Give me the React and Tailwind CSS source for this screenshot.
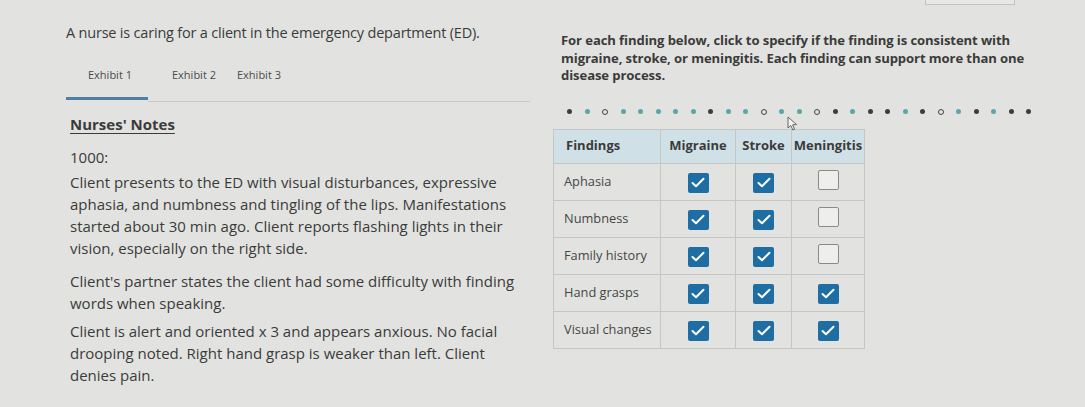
import React from 'react';

const rows = [
  { name: 'Aphasia', checks: [true, true, false] },
  { name: 'Numbness', checks: [true, true, false] },
  { name: 'Family history', checks: [true, true, false] },
  { name: 'Hand grasps', checks: [true, true, true] },
  { name: 'Visual changes', checks: [true, true, true] },
];

// d = dark, t = teal, r = ring
const dots = 'dtrtttttdttrttrdtddtdrtdtdd'.split('');

const Check = ({ on }) =>
  on ? (
    <span className="inline-flex h-[20px] w-[21px] items-center justify-center rounded-[2px] bg-[#1e6ea3]">
      <svg width="14" height="11" viewBox="0 0 14 11" fill="none">
        <path d="M1.5 6 L5 9.2 L12.5 1.8" stroke="white" strokeWidth="2" strokeLinecap="round" strokeLinejoin="round" />
      </svg>
    </span>
  ) : (
    <span className="inline-block h-[20px] w-[21px] rounded-[2px] border-[1.5px] border-[#8a8b88] bg-[#eeefec]" />
  );

const Dot = ({ kind }) => {
  if (kind === 'r') return <span className="h-[6px] w-[6px] rounded-full border-[1.5px] border-[#444]" />;
  if (kind === 't') return <span className="h-[5px] w-[5px] rounded-full bg-[#5aa6a8]" />;
  return <span className="h-[5px] w-[5px] rounded-full bg-[#3d3d3d]" />;
};

export default function App() {
  return (
    <div className="h-[407px] w-[1085px] overflow-hidden bg-[#e2e3e0] text-[#3a3b3a]" style={{ fontFamily: '"Open Sans", "Noto Sans", sans-serif' }}>
      <div className="flex h-[5px]">
        <div className="ml-[925px] h-[5px] w-[90px] border border-t-0 border-[#c3c4c1] bg-[#e8e9e6]" />
      </div>
      <div className="flex">
        {/* left: exhibit */}
        <div className="w-[553px] shrink-0 pl-[66px]">
          <p className="mt-[18px] text-[14.5px] leading-[20px] tracking-[-0.2px]">A nurse is caring for a client in the emergency department (ED).</p>
          <div className="mt-[24px] w-[464px]">
            <div className="flex text-[11px] text-[#4a4b4a]">
              <div className="w-[82px] pb-[13px] pl-[22px]">Exhibit 1</div>
              <div className="w-[84px] pb-[13px] pl-[24px]">Exhibit 2</div>
              <div className="pb-[13px] pl-[5px]">Exhibit 3</div>
            </div>
            <div className="flex items-end">
              <div className="h-[3px] w-[82px] bg-[#4f7fa3]" />
              <div className="mb-[-2px] h-[1px] flex-1 bg-[#c9cac7]" />
            </div>
          </div>
          <div className="pl-[4px]">
            <h2 className="mt-[14px] text-[15px] font-bold leading-[20px] underline underline-offset-[3px]">Nurses' Notes</h2>
            <p className="mt-[12px] text-[15px] leading-[22px]">1000:</p>
            <div className="w-[456px] text-[15px] leading-[22px]">
              <p className="mt-[3px]">Client presents to the ED with visual disturbances, expressive aphasia, and numbness and tingling of the lips. Manifestations started about 30 min ago. Client reports flashing lights in their vision, especially on the right side.</p>
              <p className="mt-[11px]">Client's partner states the client had some difficulty with finding words when speaking.</p>
              <p className="mt-[6px]">Client is alert and oriented x 3 and appears anxious. No facial drooping noted. Right hand grasp is weaker than left. Client denies pain.</p>
            </div>
          </div>
        </div>

        {/* right: question */}
        <div className="flex-1">
          <p className="mt-[27px] ml-[8px] w-[490px] text-[13.1px] font-bold leading-[17.5px] tracking-[-0.1px]">
            For each finding below, click to specify if the finding is consistent with migraine, stroke, or meningitis. Each finding can support more than one disease process.
          </p>
          <div className="mt-[24px] flex items-center gap-[12.5px] pl-[14px]">
            {dots.map((d, i) => (
              <Dot key={i} kind={d} />
            ))}
          </div>
          <div className="relative">
            <svg className="absolute left-[234px] top-[1px]" width="11" height="15" viewBox="0 0 11 15">
              <path d="M1 1 L1 12 L3.8 9.5 L5.8 14 L7.6 13.2 L5.6 8.8 L9.5 8.6 Z" fill="#f3f3f1" stroke="#555" strokeWidth="0.9" strokeLinejoin="round" />
            </svg>
          </div>
          <table className="mt-[14px] border-collapse text-[12.8px]">
            <thead>
              <tr className="h-[34px] bg-[#cfe1e7]">
                <th className="w-[107px] border border-[#c5c7c4] pl-[12px] text-left text-[13px] font-bold">Findings</th>
                <th className="w-[75px] border border-[#c5c7c4] text-center text-[13px] font-bold">Migraine</th>
                <th className="w-[56px] border border-[#c5c7c4] text-center text-[13px] font-bold">Stroke</th>
                <th className="w-[73px] border border-[#c5c7c4] text-center text-[13px] font-bold">Meningitis</th>
              </tr>
            </thead>
            <tbody>
              {rows.map((r) => (
                <tr key={r.name} className="h-[37px]">
                  <td className="border border-[#c5c7c4] pl-[10px] text-[#454645]">{r.name}</td>
                  {r.checks.map((c, i) => (
                    <td key={i} className="border border-[#c5c7c4] pt-[3px] text-center align-middle">
                      <Check on={c} />
                    </td>
                  ))}
                </tr>
              ))}
            </tbody>
          </table>
        </div>
      </div>
    </div>
  );
}
